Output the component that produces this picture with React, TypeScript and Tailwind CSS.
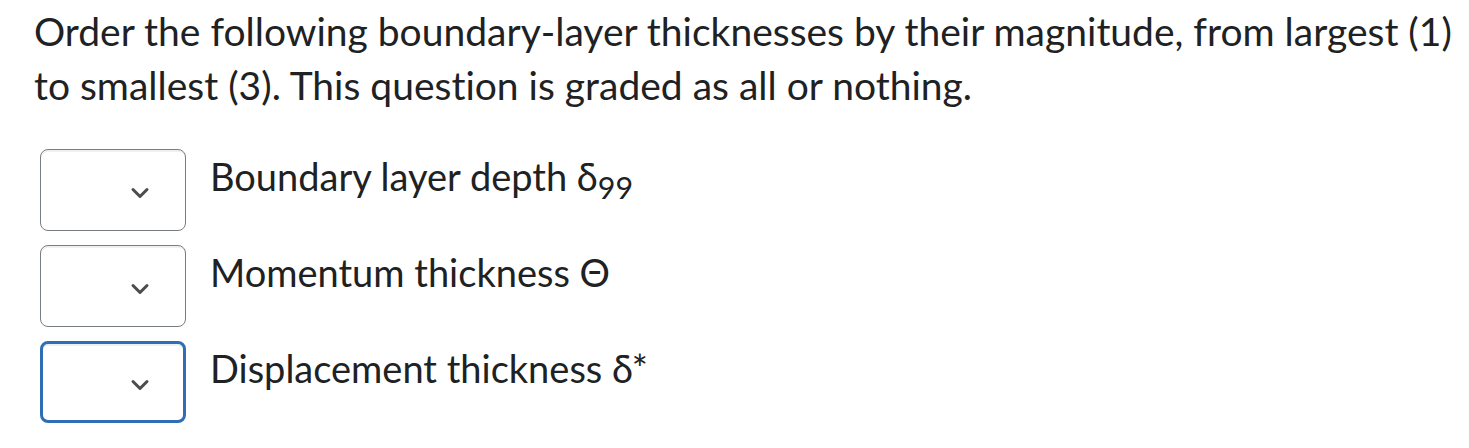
import { ChevronDown } from 'lucide-react';

const ITEMS: { label: string; sym: React.ReactNode; focused?: boolean }[] = [
  { label: 'Boundary layer depth ', sym: <>δ<sub className="text-[0.8em]">99</sub></> },
  { label: 'Momentum thickness ', sym: <>Θ</> },
  { label: 'Displacement thickness ', sym: <>δ*</>, focused: true },
];

function OrderSelect({ focused }: { focused?: boolean }) {
  return (
    <div
      className={`flex h-[82px] w-[146px] shrink-0 items-center justify-end rounded-lg bg-white shadow-[inset_0_2px_0_#eef0f3] ${
        focused ? 'border-[3px] border-[#2f6db5] pr-[29px]' : 'border border-[#787d82] pr-[31px]'
      }`}
    >
      <ChevronDown className="mt-[6px] h-7 w-7 text-[#4a4c4e]" strokeWidth={2.6} />
    </div>
  );
}

export default function App() {
  return (
    <div className="min-h-screen bg-white pl-[34px] pr-[8px] pt-[4px] font-['Lato',sans-serif] text-[#202122] [font-variant-ligatures:none]">
      <p className="text-[39px] leading-[54px]">
        Order the following boundary-layer thicknesses by their magnitude, from largest (1) to smallest (3). This question is graded as all or nothing.
      </p>
      <div className="mt-[37px] flex flex-col gap-[14px] pl-[6px]">
        {ITEMS.map((it) => (
          <div key={it.label} className="flex items-start gap-[24px]">
            <OrderSelect focused={it.focused} />
            <span className="pt-[1px] text-[38px] leading-[52px]">
              {it.label}
              {it.sym}
            </span>
          </div>
        ))}
      </div>
    </div>
  );
}
